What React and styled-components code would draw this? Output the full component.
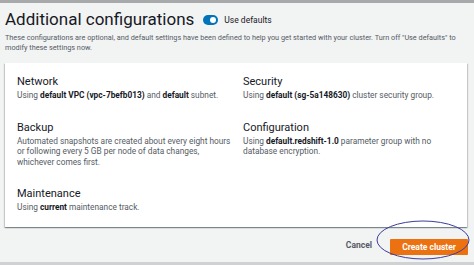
import React from 'react';
import styled, { createGlobalStyle } from 'styled-components';

const GlobalStyle = createGlobalStyle`
  html, body {
    margin: 0;
    padding: 0;
    background: #f2f3f3;
  }
  body {
    font-family: Roboto, "Liberation Sans", sans-serif;
    color: #16191f;
  }
`;

const Page = styled.div`
  width: 474px;
  height: 265px;
  box-sizing: border-box;
  background: #f2f3f3;
  border-top: 3px solid #a7a9aa;
  border-bottom: 3px solid #cfd1d2;
  display: flex;
  flex-direction: column;
`;

const Header = styled.div`
  padding: 4px 5px 0 5px;
`;

const TitleRow = styled.div`
  display: flex;
  align-items: center;
  gap: 9px;
`;

const Title = styled.h1`
  margin: 0;
  font-size: 17px;
  font-weight: 400;
  line-height: 24px;
  color: #16191f;
`;

const ToggleLabel = styled.label`
  display: flex;
  align-items: center;
  gap: 6px;
  font-size: 8.5px;
  color: #16191f;
  margin-top: 1px;
`;

const Switch = styled.span`
  width: 15px;
  height: 10px;
  border-radius: 5px;
  background: #0073bb;
  position: relative;
  display: inline-block;

  &::after {
    content: '';
    position: absolute;
    right: 2px;
    top: 2px;
    width: 6px;
    height: 6px;
    border-radius: 50%;
    background: #fff;
  }
`;

const Description = styled.p`
  margin: 2px 0 0 0;
  font-size: 7.3px;
  line-height: 10px;
  color: #545b64;
`;

const Card = styled.div`
  margin: 10px 7px 0 5px;
  background: #fff;
  box-shadow: 0 1px 1px rgba(0, 28, 36, 0.3), 1px 1px 1px rgba(0, 28, 36, 0.15), -1px 1px 1px rgba(0, 28, 36, 0.15);
  padding: 12px 6px 12px 12px;
  display: grid;
  grid-template-columns: 214px 1fr;
  column-gap: 12px;
  height: 164px;
  box-sizing: border-box;
`;

const Column = styled.div`
  display: flex;
  flex-direction: column;
  gap: 20px;
`;

const Section = styled.div``;

const SectionTitle = styled.div`
  font-size: 11px;
  line-height: 14px;
  color: #16191f;
`;

const SectionText = styled.div`
  margin-top: 1px;
  font-size: 8.3px;
  line-height: 10.5px;
  color: #545b64;

  b {
    font-weight: 700;
    color: #16191f;
  }
`;

const Footer = styled.div`
  flex: 1;
  display: flex;
  justify-content: flex-end;
  align-items: center;
  gap: 18px;
  padding: 0 6px 0 0;
`;

const LinkButton = styled.button`
  border: none;
  background: none;
  padding: 0;
  font-family: inherit;
  font-size: 8.5px;
  font-weight: 700;
  color: #545b64;
`;

const ButtonWrap = styled.div`
  position: relative;
`;

const PrimaryButton = styled.button`
  border: none;
  background: #ec7211;
  color: #fff;
  font-family: inherit;
  font-size: 8.5px;
  font-weight: 700;
  width: 78px;
  height: 16px;
  padding: 0;
  border-radius: 1px;
`;

const Annotation = styled.svg`
  position: absolute;
  left: -14px;
  top: -15px;
  width: 94px;
  height: 40px;
  pointer-events: none;
`;

const sections = {
  left: [
    {
      title: 'Network',
      text: (
        <>Using <b>default VPC (vpc-7befb013)</b> and <b>default</b> subnet.</>
      ),
    },
    {
      title: 'Backup',
      text: (
        <>Automated snapshots are created about every eight hours or following every 5 GB per node of data changes, whichever comes first.</>
      ),
    },
    {
      title: 'Maintenance',
      text: (
        <>Using <b>current</b> maintenance track.</>
      ),
    },
  ],
  right: [
    {
      title: 'Security',
      text: (
        <>Using <b>default (sg-5a148630)</b> cluster security group.</>
      ),
    },
    {
      title: 'Configuration',
      text: (
        <>Using <b>default.redshift-1.0</b> parameter group with no database encryption.</>
      ),
    },
  ],
};

const renderColumn = (items) => (
  <Column>
    {items.map((item) => (
      <Section key={item.title}>
        <SectionTitle>{item.title}</SectionTitle>
        <SectionText>{item.text}</SectionText>
      </Section>
    ))}
  </Column>
);

export default function App() {
  return (
    <Page>
      <GlobalStyle />
      <Header>
        <TitleRow>
          <Title>Additional configurations</Title>
          <ToggleLabel>
            <Switch />
            Use defaults
          </ToggleLabel>
        </TitleRow>
        <Description>
          These configurations are optional, and default settings have been defined to help you get started with your cluster. Turn off "Use defaults" to modify these settings now.
        </Description>
      </Header>
      <Card>
        {renderColumn(sections.left)}
        {renderColumn(sections.right)}
      </Card>
      <Footer>
        <LinkButton>Cancel</LinkButton>
        <ButtonWrap>
          <PrimaryButton>Create cluster</PrimaryButton>
          <Annotation viewBox="0 0 94 40">
            <ellipse cx="47" cy="20" rx="46" ry="19" fill="none" stroke="#3c3c9c" strokeWidth="1" />
          </Annotation>
        </ButtonWrap>
      </Footer>
    </Page>
  );
}
